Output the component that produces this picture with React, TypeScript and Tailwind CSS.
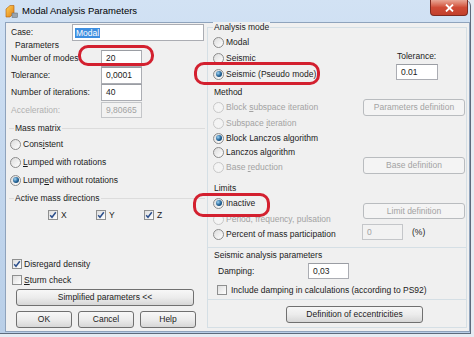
import React from "react";
import clsx from "clsx";

type RowItem = { label: React.ReactNode; checked?: boolean; disabled?: boolean; h: string };

function Radio({ checked, disabled }: { checked?: boolean; disabled?: boolean }) {
  return (
    <span
      className={clsx(
        "w-[11px] h-[11px] rounded-full border flex items-center justify-center shrink-0",
        disabled
          ? "border-[#c8c8c8] bg-[#f4f4f4]"
          : "border-[#8c8c8c] bg-gradient-to-br from-[#dcdcdc] to-[#ffffff]"
      )}
    >
      {checked && (
        <span className="w-[6px] h-[6px] rounded-full bg-[radial-gradient(circle_at_35%_35%,#9fd4f5,#1f5f92_55%,#0b3459)]" />
      )}
    </span>
  );
}

function Check({ checked }: { checked?: boolean }) {
  return (
    <span className="w-[10px] h-[10px] border border-[#8e8f8f] bg-gradient-to-br from-[#dedede] to-[#ffffff] flex items-center justify-center shrink-0">
      {checked && (
        <svg width="8" height="8" viewBox="0 0 8 8">
          <path d="M1.2 4.2 L3 6.2 L6.8 1.2" fill="none" stroke="#2c4f8c" strokeWidth="1.5" />
        </svg>
      )}
    </span>
  );
}

function Field({ value, w, disabled, h = "h-[17px]" }: { value: string; w: string; disabled?: boolean; h?: string }) {
  return (
    <span
      className={clsx(
        "border flex items-center pl-[4px] shrink-0",
        w,
        h,
        disabled ? "border-[#c4c6c9] bg-[#f2f2f2] text-[#a2a2a2]" : "border-[#abadb3] border-t-[#9a9da3] bg-white"
      )}
    >
      {value}
    </span>
  );
}

function Btn({ children, className, disabled }: { children: React.ReactNode; className: string; disabled?: boolean }) {
  return (
    <div
      className={clsx(
        "border rounded-[3px] flex items-center justify-center shrink-0",
        disabled
          ? "border-[#b9bcbf] bg-[#f4f4f4] text-[#a3a3a3]"
          : "border-[#707070] bg-gradient-to-b from-[#f7f7f7] via-[#ececec] to-[#d7d7d7] text-[#1b1b1b]",
        className
      )}
    >
      {children}
    </div>
  );
}

function RadioRow({ item, pl }: { item: RowItem; pl: string }) {
  return (
    <div className={clsx("flex items-center gap-[2px]", item.h, pl, item.disabled && "text-[#a3a3a3]")}>
      <Radio checked={item.checked} disabled={item.disabled} />
      <span>{item.label}</span>
    </div>
  );
}

function GroupLine({ label, children, className }: { label: string; children: React.ReactNode; className?: string }) {
  return (
    <div className={clsx("relative border-t border-[#dcdcdc] ml-[3px] mr-[2px]", className)}>
      <span className="absolute -top-[6px] left-[5px] px-[1px] bg-[#f0f0f0] leading-[11px]">{label}</span>
      {children}
    </div>
  );
}

const analysisModes: RowItem[] = [
  { label: "Modal", h: "h-[16px]" },
  { label: "Seismic", h: "h-[16px]" },
  { label: "Seismic (Pseudo mode)", checked: true, h: "h-[16px]" },
];

const methods: RowItem[] = [
  { label: <>Block <u>s</u>ubspace iteration</>, disabled: true, h: "h-[16px]" },
  { label: <>Subspace <u>i</u>teration</>, disabled: true, h: "h-[16px]" },
  { label: "Block Lanczos algorithm", checked: true, h: "h-[14px]" },
  { label: <>Lanczos al<u>g</u>orithm</>, h: "h-[14px]" },
  { label: <>Base <u>r</u>eduction</>, disabled: true, h: "h-[16px]" },
];

const limits: RowItem[] = [
  { label: "Inactive", checked: true, h: "h-[16px]" },
  { label: "Period, frequency, pulsation", disabled: true, h: "h-[16px]" },
  { label: "Percent of mass participation", h: "h-[15px]" },
];

const massMatrix: RowItem[] = [
  { label: <>Cons<u>i</u>stent</>, h: "h-[18px]" },
  { label: <><u>L</u>umped with rotations</>, h: "h-[18px]" },
  { label: <>Lump<u>e</u>d without rotations</>, checked: true, h: "h-[18px]" },
];

const paramRows = [
  { label: "Number of modes", value: "20" },
  { label: "Tolerance:", value: "0,0001" },
  { label: "Number of iterations:", value: "40" },
];

function AppIcon() {
  return (
    <svg width="13" height="13" viewBox="0 0 13 13">
      <defs>
        <linearGradient id="ic" x1="0" y1="0" x2="1" y2="1">
          <stop offset="0" stopColor="#ffd45a" />
          <stop offset="1" stopColor="#e07a10" />
        </linearGradient>
      </defs>
      <path d="M1 12 L1 4 L5 0.5 L9 0.5 L9 8 L5 12 Z" fill="url(#ic)" stroke="#b15c08" strokeWidth="0.6" />
      <rect x="7" y="8" width="5.5" height="4.5" fill="#9aa4ad" stroke="#5d6670" strokeWidth="0.5" />
    </svg>
  );
}

export default function App() {
  return (
    <div className="w-[474px] h-[337px] bg-[#e6ecf3] relative overflow-hidden font-['Liberation_Sans',Arial,sans-serif] text-[8.5px] text-[#1b1b1b]">
      <div className="w-[471px] h-[334px] bg-gradient-to-b from-[#d2e2f4] via-[#c3d7ee] to-[#b9cfe8] border-r border-b border-[#5d6b7c] rounded-tr-[6px] flex flex-col">
        {/* === TITLE BAR === */}
        <div className="h-[22px] flex items-center shrink-0">
          <div className="ml-[5px]">
            <AppIcon />
          </div>
          <span className="ml-[4px] text-[9.5px] text-black">Modal Analysis Parameters</span>
          <div className="ml-auto mr-[2px] self-start w-[38px] h-[16px] rounded-b-[4px] border border-t-0 border-[#7e2a20] bg-gradient-to-b from-[#e8a696] via-[#cf4b36] to-[#c2402c] flex items-center justify-center">
            <svg width="9" height="8" viewBox="0 0 9 8">
              <path d="M1 0.5 L8 7.5 M8 0.5 L1 7.5" stroke="#fff" strokeWidth="1.8" />
            </svg>
          </div>
        </div>

        {/* === CLIENT === */}
        <div className="ml-[5px] w-[465px] h-[310px] border border-[#8fa3bc] bg-[#f0f0f0] flex">
          {/* left column */}
          <div className="w-[201px] flex flex-col">
            <div className="mt-[1px] h-[17px] flex items-center">
              <span className="w-[66px] pl-[5px]">Case:</span>
              <span className="w-[132px] h-[17px] border border-[#abadb3] bg-white flex items-center pl-[2px]">
                <span className="bg-[#3d8ee0] text-white px-[1px] leading-[10px]">Modal</span>
              </span>
            </div>
            <div className="h-[9px] leading-[9px] pl-[9px]">Parameters</div>
            {paramRows.map((r) => (
              <div key={r.label} className="h-[17px] flex items-center">
                <span className="w-[95px] pl-[5px]">{r.label}</span>
                <Field value={r.value} w="w-[41px]" />
              </div>
            ))}
            <div className="mt-[1px] h-[16px] flex items-center">
              <span className="w-[95px] pl-[5px] text-[#b0b0b0]">Acceleration:</span>
              <Field value="9,80665" w="w-[41px]" h="h-[16px]" disabled />
            </div>

            <GroupLine label="Mass matrix" className="mt-[10px]">
              <div className="pt-[6px] -ml-[3px]">
                {massMatrix.map((m, i) => (
                  <RadioRow key={i} item={m} pl="pl-[4px]" />
                ))}
              </div>
            </GroupLine>

            <GroupLine label="Active mass directions" className="mt-[9px]">
              <div className="pt-[9px] h-[23px] flex items-center pl-[42px] -ml-[3px]">
                {["X", "Y", "Z"].map((a) => (
                  <div key={a} className="w-[48px] flex items-center gap-[3px]">
                    <Check checked />
                    <span>{a}</span>
                  </div>
                ))}
              </div>
            </GroupLine>

            <div className="mt-auto flex flex-col pb-[3px]">
              <div className="h-[16px] flex items-center gap-[2px] pl-[6px]">
                <Check checked />
                <span>Disregard density</span>
              </div>
              <div className="h-[16px] flex items-center gap-[2px] pl-[6px]">
                <Check />
                <span>
                  <u>S</u>turm check
                </span>
              </div>
              <Btn className="mt-[1px] ml-[10px] w-[178px] h-[17px]">Simplified parameters &lt;&lt;</Btn>
              <div className="mt-[5px] ml-[10px] flex gap-[6px]">
                <Btn className="w-[56px] h-[17px]">OK</Btn>
                <Btn className="w-[56px] h-[17px]">Cancel</Btn>
                <Btn className="w-[56px] h-[17px]">Help</Btn>
              </div>
            </div>
          </div>

          {/* right panel */}
          <div className="w-[260px] mt-[4px] mb-[3px] border border-[#d5dfe5] relative flex flex-col">
            <span className="absolute -top-[6px] left-[5px] px-[1px] bg-[#f0f0f0] leading-[11px]">Analysis mode</span>

            {/* analysis mode */}
            <div className="flex">
              <div className="w-[188px] pt-[6px]">
                {analysisModes.map((m, i) => (
                  <RadioRow key={i} item={m} pl="pl-[5px]" />
                ))}
              </div>
              <div className="pt-[23px] flex flex-col">
                <span className="h-[10px] leading-[10px] pl-[1px]">Tolerance:</span>
                <div className="mt-[3px]">
                  <Field value="0.01" w="w-[42px]" h="h-[16px]" />
                </div>
              </div>
            </div>

            {/* method */}
            <div className="mt-[5px] h-[11px] leading-[11px] pl-[6px]">Method</div>
            <div className="flex">
              <div className="w-[155px] mt-[1px]">
                {methods.map((m, i) => (
                  <RadioRow key={i} item={m} pl="pl-[5px]" />
                ))}
              </div>
              <div className="flex flex-col">
                <Btn disabled className="mt-[1px] w-[102px] h-[17px]">Parameters definition</Btn>
                <Btn disabled className="mt-[41px] w-[102px] h-[17px]">Base definition</Btn>
              </div>
            </div>

            {/* limits */}
            <div className="mt-[8px] h-[10px] leading-[10px] pl-[6px]">Limits</div>
            <div className="flex">
              <div className="w-[154px] mt-[2px]">
                {limits.map((m, i) => (
                  <RadioRow key={i} item={m} pl="pl-[5px]" />
                ))}
              </div>
              <div className="flex flex-col">
                <Btn disabled className="mt-[10px] ml-[1px] w-[102px] h-[16px]">Limit definition</Btn>
                <div className="mt-[5px] flex items-center">
                  <Field value="0" w="w-[41px]" h="h-[16px]" disabled />
                  <span className="ml-[9px]">(%)</span>
                </div>
              </div>
            </div>

            {/* seismic */}
            <div className="mt-[5px] border-t border-[#d5dfe5]" />
            <div className="mt-[2px] h-[10px] leading-[10px] pl-[6px]">Seismic analysis parameters</div>
            <div className="mt-[3px] h-[16px] flex items-center">
              <span className="w-[100px] pl-[10px]">Damping:</span>
              <Field value="0,03" w="w-[41px]" h="h-[16px]" />
            </div>
            <div className="mt-[4px] h-[14px] flex items-center gap-[4px] pl-[9px]">
              <Check />
              <span>Include damping in calculations (according to PS92)</span>
            </div>
            <div className="mt-[2px] border-t border-[#d5dfe5]" />
            <Btn className="mt-[6px] ml-[78px] w-[137px] h-[17px]">Definition of eccentricities</Btn>
          </div>
        </div>
      </div>

      {/* === ANNOTATIONS === */}
      <div className="absolute left-[78px] top-[45px] w-[76px] h-[21px] border-[3px] border-[#d3202f] rounded-[10px]" />
      <div className="absolute left-[194px] top-[62px] w-[126px] h-[23px] border-[3px] border-[#d3202f] rounded-[10px]" />
      <div className="absolute left-[193px] top-[193px] w-[77px] h-[24px] border-[3px] border-[#d3202f] rounded-[10px]" />
    </div>
  );
}
